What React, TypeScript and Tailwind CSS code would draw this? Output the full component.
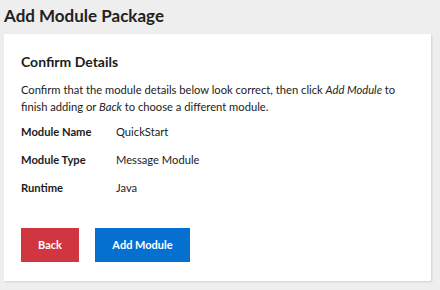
import React from "react";

export default function App() {
  const rows = [
    ["Module Name", "QuickStart"],
    ["Module Type", "Message Module"],
    ["Runtime", "Java"],
  ];
  return (
    <div
      className="w-[440px] h-[290px] bg-[#eeeeee] pl-[4px] pr-[9px] pt-[4px] text-[#1c1c1c]"
      style={{ fontFamily: "Lato, 'Open Sans', sans-serif" }}
    >
      <h1 className="text-[17px] font-bold leading-[24px] text-[#222]">Add Module Package</h1>
      <div className="mt-[6px] bg-white h-[247px] px-[17px] pt-[18px] shadow-[1px_1px_2px_rgba(0,0,0,0.12)]">
        <h2 className="text-[14px] font-bold leading-[20px]">Confirm Details</h2>
        <p className="mt-[9px] text-[11.2px] leading-[17px]">
          Confirm that the module details below look correct, then click <em>Add Module</em> to finish adding or{" "}
          <em>Back</em> to choose a different module.
        </p>
        <div className="mt-[8px] flex flex-col gap-[11px]">
          {rows.map(([k, v]) => (
            <div key={k} className="flex text-[11.2px] leading-[17px]">
              <div className="w-[95px] font-bold">{k}</div>
              <div>{v}</div>
            </div>
          ))}
        </div>
        <div className="mt-[32px] flex gap-[16px]">
          <button className="w-[58px] h-[34px] bg-[#d1353f] text-white text-[11px] font-bold">Back</button>
          <button className="w-[95px] h-[34px] bg-[#0670d1] text-white text-[11px] font-bold">Add Module</button>
        </div>
      </div>
    </div>
  );
}
